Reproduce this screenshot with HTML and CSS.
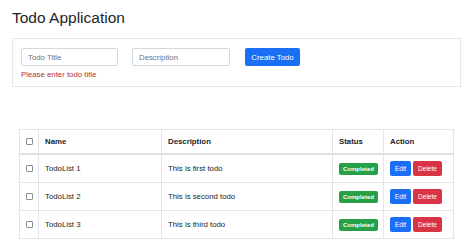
FILE: index.html
```html
<!DOCTYPE html>
<html lang="en">
<head>
    <meta charset="UTF-8">
    <meta name="viewport" content="width=device-width, initial-scale=1.0">
    <title>Todo Application</title>
    <link rel="stylesheet" href="styles.css">
</head>
<body>
    <h1 class="titulo">Todo Application</h1>

    <div class="cartao">
        <div class="linha">
            <input type="text" class="campo" placeholder="Todo Title">
            <input type="text" class="campo campo-desc" placeholder="Description">
            <button class="btn-criar">Create Todo</button>
        </div>
        <div class="erro">Please enter todo title</div>
    </div>

    <table class="tabela">
        <colgroup>
            <col class="c-check">
            <col class="c-nome">
            <col class="c-desc">
            <col class="c-status">
            <col class="c-acao">
        </colgroup>
        <thead>
            <tr>
                <th><span class="caixa"></span></th>
                <th>Name</th>
                <th>Description</th>
                <th>Status</th>
                <th>Action</th>
            </tr>
        </thead>
        <tbody>
            <tr>
                <td><span class="caixa"></span></td>
                <td>TodoList 1</td>
                <td>This is first todo</td>
                <td><span class="selo">Completed</span></td>
                <td><button class="btn-mini editar">Edit</button><button class="btn-mini apagar">Delete</button></td>
            </tr>
            <tr>
                <td><span class="caixa"></span></td>
                <td>TodoList 2</td>
                <td>This is second todo</td>
                <td><span class="selo">Completed</span></td>
                <td><button class="btn-mini editar">Edit</button><button class="btn-mini apagar">Delete</button></td>
            </tr>
            <tr>
                <td><span class="caixa"></span></td>
                <td>TodoList 3</td>
                <td>This is third todo</td>
                <td><span class="selo">Completed</span></td>
                <td><button class="btn-mini editar">Edit</button><button class="btn-mini apagar">Delete</button></td>
            </tr>
        </tbody>
    </table>
</body>
</html>
```

FILE: styles.css
```css
body{
    margin: 0;
    background-color: #fff;
    color: #212529;
    font-family: "Liberation Sans", Arial, sans-serif;
}
h1.titulo{
    margin: 8px 12px 0;
    font-size: 15.5px;
    line-height: 19px;
    font-weight: normal;
}
div.cartao{
    margin: 11px 0 0 12px;
    width: 449px;
    box-sizing: border-box;
    border: 1px solid #e6e6e6;
    padding: 9px 8px 6px;
}
div.linha{
    display: flex;
    align-items: center;
}
input.campo{
    box-sizing: border-box;
    width: 97px;
    height: 18px;
    margin: 0 14px 0 0;
    padding: 0 6px;
    border: 1px solid #d6d9dc;
    border-radius: 2px;
    font-family: inherit;
    font-size: 7.8px;
    color: #495057;
}
input.campo-desc{
    width: 98px;
    margin-right: 15px;
}
input.campo::placeholder{
    color: #6c757d;
}
button.btn-criar{
    box-sizing: border-box;
    width: 55px;
    height: 18px;
    padding: 0;
    border: none;
    border-radius: 2px;
    background-color: #1a6ff5;
    color: #fff;
    font-family: inherit;
    font-size: 7.8px;
}
div.erro{
    margin-top: 4px;
    font-size: 7.8px;
    line-height: 10px;
    color: #b0303c;
}
table.tabela{
    margin: 42px 0 0 19px;
    border-collapse: collapse;
    table-layout: fixed;
    width: 434px;
    font-size: 7.8px;
}
col.c-check{ width: 19px; }
col.c-nome{ width: 123px; }
col.c-desc{ width: 171px; }
col.c-status{ width: 51px; }
col.c-acao{ width: 70px; }
table.tabela th,
table.tabela td{
    border: 1px solid #e3e5e8;
    padding: 0 6px;
    text-align: left;
    vertical-align: middle;
    white-space: nowrap;
}
table.tabela th{
    height: 23px;
    font-weight: bold;
    border-bottom: 2px solid #e0e2e5;
}
table.tabela td{
    height: 27px;
}
table.tabela th:first-child,
table.tabela td:first-child{
    padding: 0;
    text-align: center;
}
span.caixa{
    display: inline-block;
    width: 5px;
    height: 5px;
    border: 1px solid #8a8f94;
    border-radius: 1px;
    vertical-align: middle;
}
span.selo{
    display: inline-block;
    width: 39px;
    height: 12px;
    line-height: 12px;
    border-radius: 2px;
    background-color: #28a046;
    color: #fff;
    font-size: 6px;
    font-weight: bold;
    text-align: center;
}
button.btn-mini{
    box-sizing: border-box;
    height: 15px;
    padding: 0;
    border: none;
    border-radius: 2px;
    color: #fff;
    font-family: inherit;
    font-size: 6.6px;
    vertical-align: middle;
}
button.editar{
    width: 21px;
    background-color: #1a6ff5;
    margin-right: 2px;
}
button.apagar{
    width: 29px;
    background-color: #d93445;
}
```
